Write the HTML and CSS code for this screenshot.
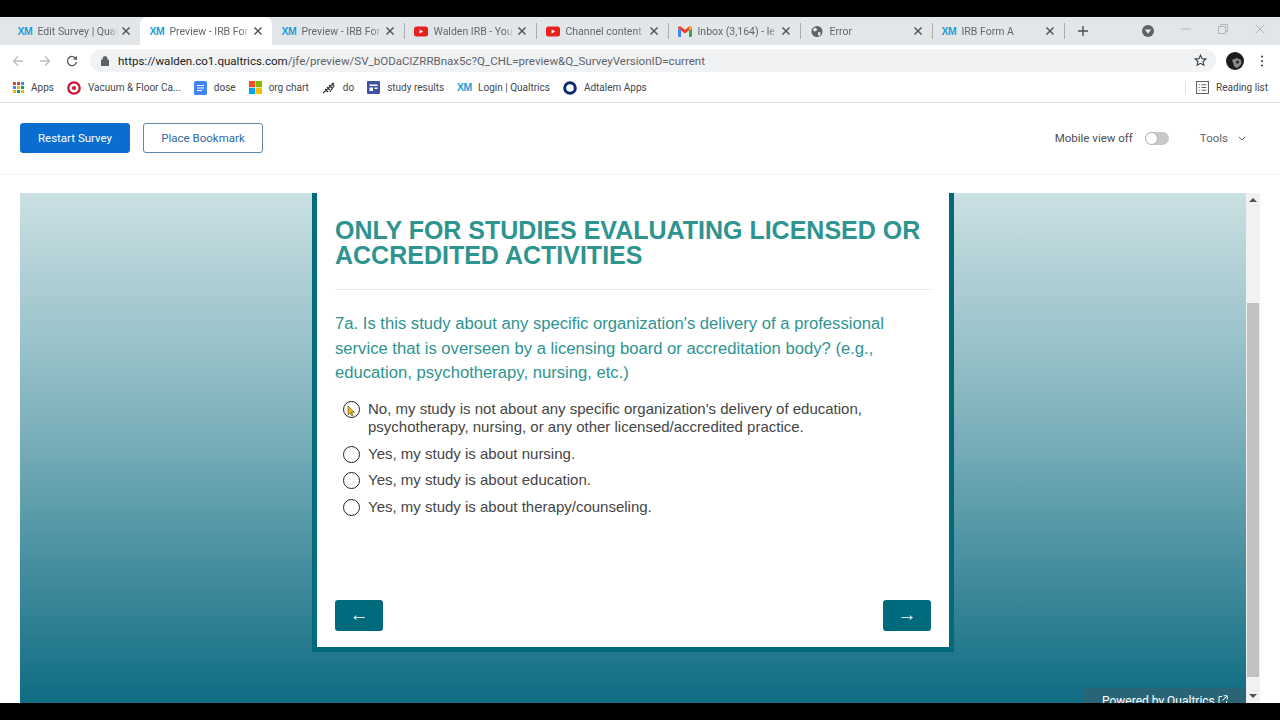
FILE: index.html
```html
<!DOCTYPE html>
<html lang="en">

<head>
    <meta charset="UTF-8">
    <meta name="viewport" content="width=device-width, initial-scale=1.0">
    <title>Preview - IRB Form</title>
    <link rel="stylesheet" href="styles.css">
</head>

<body>
    <svg class="defs" width="0" height="0">
        <symbol id="close" viewBox="0 0 10 10">
            <path d="M1.5 1.5l7 7M8.5 1.5l-7 7" fill="none" stroke="#4a4d51" stroke-width="1.4" />
        </symbol>
        <symbol id="yt" viewBox="0 0 14 10">
            <rect width="14" height="10" rx="2.5" fill="#e8211c" />
            <path d="M5.6 2.9v4.2L9.2 5z" fill="#fff" />
        </symbol>
    </svg>

    <div class="black-bar"></div>

    <!-- Tabs -->
    <div class="tab-strip">
        <div class="tab">
            <span class="xm">XM</span>
            <span class="tab-title">Edit Survey | Qual</span>
            <svg class="tab-close"><use href="#close" /></svg>
        </div>
        <div class="tab active">
            <span class="xm">XM</span>
            <span class="tab-title">Preview - IRB For</span>
            <svg class="tab-close"><use href="#close" /></svg>
        </div>
        <div class="tab">
            <span class="xm">XM</span>
            <span class="tab-title">Preview - IRB For</span>
            <svg class="tab-close"><use href="#close" /></svg>
        </div>
        <div class="tab sep">
            <svg class="tab-icon"><use href="#yt" /></svg>
            <span class="tab-title">Walden IRB - You</span>
            <svg class="tab-close"><use href="#close" /></svg>
        </div>
        <div class="tab sep">
            <svg class="tab-icon"><use href="#yt" /></svg>
            <span class="tab-title">Channel content</span>
            <svg class="tab-close"><use href="#close" /></svg>
        </div>
        <div class="tab sep">
            <svg class="tab-icon" viewBox="0 0 14 11">
                <path d="M0 2v8a1 1 0 0 0 1 1h2V4.5z" fill="#4285f4" />
                <path d="M14 2v8a1 1 0 0 1-1 1h-2V4.5z" fill="#34a853" />
                <path d="M0 2l3 2.5L7 7.5l4-3L14 2C14 .5 12.5-.3 11.300 .6L7 3.800 2.700 .6C1.500-.3 0 .5 0 2z" fill="#ea4335" />
                <path d="M11 1v3.500L14 2C14 .8 12.200-.2 11 1z" fill="#fbbc04" />
            </svg>
            <span class="tab-title">Inbox (3,164) - le</span>
            <svg class="tab-close"><use href="#close" /></svg>
        </div>
        <div class="tab sep">
            <svg class="tab-icon" viewBox="0 0 12 12">
                <circle cx="6" cy="6" r="6" fill="#5f6368" />
                <path d="M3 1.500l2.500 1 .5 2-2 1.500-2.500-1zM7 6.500l3 .5-.5 3L7.500 11z" fill="#e8eaed" />
            </svg>
            <span class="tab-title">Error</span>
            <svg class="tab-close"><use href="#close" /></svg>
        </div>
        <div class="tab sep">
            <span class="xm">XM</span>
            <span class="tab-title">IRB Form A</span>
            <svg class="tab-close"><use href="#close" /></svg>
        </div>
        <div class="new-tab sep">
            <svg viewBox="0 0 10 10" width="10" height="10">
                <path d="M5 0v10M0 5h10" stroke="#4a4d51" stroke-width="1.400" />
            </svg>
        </div>
        <svg class="profile-drop" viewBox="0 0 12 12" width="12" height="12">
            <circle cx="6" cy="6" r="6" fill="#5f6368" />
            <path d="M2.800 4.500h6.400L6 8.800z" fill="#e8eaed" />
        </svg>
        <div class="window-btns">
            <svg viewBox="0 0 10 10" width="10" height="10"><path d="M0 5h10" stroke="#b4b6b9" /></svg>
            <svg viewBox="0 0 10 10" width="10" height="10">
                <path d="M.5 2.500h7v7h-7zM2.500 2.500v-2h7v7h-2" fill="none" stroke="#b4b6b9" />
            </svg>
            <svg viewBox="0 0 10 10" width="10" height="10"><path d="M.5 .5l9 9M9.500 .5l-9 9" stroke="#b4b6b9" /></svg>
        </div>
    </div>

    <!-- Address bar -->
    <div class="toolbar">
        <svg class="nav-icon" viewBox="0 0 12 12" width="12" height="12">
            <path d="M11 6H2M6 1.500L1.500 6 6 10.500" fill="none" stroke="#b9bcc0" stroke-width="1.300" />
        </svg>
        <svg class="nav-icon" viewBox="0 0 12 12" width="12" height="12">
            <path d="M1 6h9M6 1.500L10.500 6 6 10.500" fill="none" stroke="#b9bcc0" stroke-width="1.300" />
        </svg>
        <svg class="nav-icon" viewBox="0 0 12 12" width="12" height="12">
            <path d="M10.200 4A4.600 4.600 0 1 0 10.600 7" fill="none" stroke="#55585c" stroke-width="1.300" />
            <path d="M11 .8v4H7z" fill="#55585c" />
        </svg>
        <div class="omnibox">
            <svg class="lock" viewBox="0 0 8 10" width="8" height="10">
                <path d="M0 4h8v6H0zM1.800 4V2.600a2.200 2.200 0 0 1 4.400 0V4" fill="#5f6368" stroke="#5f6368" stroke-width=".7" fill-rule="evenodd" />
            </svg>
            <span class="url">https://walden.co1.qualtrics.com<span class="url-rest">/jfe/preview/SV_bODaClZRRBnax5c?Q_CHL=preview&amp;Q_SurveyVersionID=current</span></span>
            <svg class="star" viewBox="0 0 14 14" width="13" height="13">
                <path d="M7 1.300l1.700 3.700 4 .4-3 2.700.9 4L7 10l-3.600 2.100.9-4-3-2.700 4-.4z" fill="none" stroke="#3c4043" stroke-width="1.200" />
            </svg>
        </div>
        <svg class="avatar" viewBox="0 0 18 18" width="18" height="18">
            <circle cx="9" cy="9" r="9" fill="#1c1c1c" />
            <path d="M6 8l5-2 4 2 .5 4-4 4-3-1-1-3z" fill="#8a8a8a" />
            <circle cx="11.500" cy="10" r="1.500" fill="#222" />
        </svg>
        <svg class="menu-dots" viewBox="0 0 4 12" width="4" height="12">
            <circle cx="2" cy="1.500" r="1.100" fill="#44474a" />
            <circle cx="2" cy="6" r="1.100" fill="#44474a" />
            <circle cx="2" cy="10.500" r="1.100" fill="#44474a" />
        </svg>
    </div>

    <!-- Bookmarks -->
    <div class="bookmarks">
        <div class="bookmark">
            <svg viewBox="0 0 11 11" width="11" height="11">
                <g fill="#db4437"><rect width="3" height="3" /><rect x="4" width="3" height="3" /></g>
                <rect x="8" width="3" height="3" fill="#4285f4" />
                <rect y="4" width="3" height="3" fill="#4285f4" />
                <rect x="4" y="4" width="3" height="3" fill="#f4b400" />
                <rect x="8" y="4" width="3" height="3" fill="#0f9d58" />
                <rect y="8" width="3" height="3" fill="#f4b400" />
                <rect x="4" y="8" width="3" height="3" fill="#0f9d58" />
                <rect x="8" y="8" width="3" height="3" fill="#f4b400" />
            </svg>
            <span>Apps</span>
        </div>
        <div class="bookmark">
            <svg viewBox="0 0 14 14" width="14" height="14">
                <circle cx="7" cy="7" r="5.700" fill="none" stroke="#c8102e" stroke-width="2.200" />
                <circle cx="7" cy="7" r="2" fill="#c8102e" />
            </svg>
            <span>Vacuum &amp; Floor Ca...</span>
        </div>
        <div class="bookmark">
            <svg viewBox="0 0 13 14" width="13" height="14">
                <rect width="13" height="14" rx="1.500" fill="#4285f4" />
                <path d="M3 4.500h7M3 7h7M3 9.500h5" stroke="#fff" />
            </svg>
            <span>dose</span>
        </div>
        <div class="bookmark">
            <svg viewBox="0 0 13 13" width="13" height="13">
                <rect width="6.200" height="6.200" fill="#f25022" />
                <rect x="6.800" width="6.200" height="6.200" fill="#7fba00" />
                <rect y="6.800" width="6.200" height="6.200" fill="#00a4ef" />
                <rect x="6.800" y="6.800" width="6.200" height="6.200" fill="#ffb900" />
            </svg>
            <span>org chart</span>
        </div>
        <div class="bookmark">
            <svg viewBox="0 0 14 14" width="14" height="14">
                <path d="M1 12L12 2M3 8l3 3M5 6l3 3M7 4l3 3M10 2l2 3-4 6" fill="none" stroke="#333" stroke-width="1.100" />
            </svg>
            <span>do</span>
        </div>
        <div class="bookmark">
            <svg viewBox="0 0 13 13" width="13" height="13">
                <rect width="13" height="13" rx="1" fill="#3f51a5" />
                <path d="M2.500 3.500h8v1.500h-8zM2.500 6.500h3.500v3.500h-3.500zM7.500 6.500h3v1.500h-3z" fill="#fff" />
            </svg>
            <span>study results</span>
        </div>
        <div class="bookmark">
            <span class="xm">XM</span>
            <span>Login | Qualtrics</span>
        </div>
        <div class="bookmark">
            <svg viewBox="0 0 14 14" width="14" height="14">
                <circle cx="7" cy="7" r="5.300" fill="none" stroke="#0b2a6b" stroke-width="3" />
            </svg>
            <span>Adtalem Apps</span>
        </div>
        <div class="reading-list">
            <svg viewBox="0 0 12 12" width="13" height="13">
                <path d="M.5 .5h11v11H.5zM2.500 3.500h1M5 3.500h4.500M2.500 6h1M5 6h4.500M2.500 8.500h1M5 8.500h4.500" fill="none" stroke="#5f6368" />
            </svg>
            <span>Reading list</span>
        </div>
    </div>

    <!-- Qualtrics preview header -->
    <div class="preview-bar">
        <button class="btn btn-primary">Restart Survey</button>
        <button class="btn btn-outline">Place Bookmark</button>
        <div class="preview-right">
            <span>Mobile view off</span>
            <span class="toggle"><span class="toggle-knob"></span></span>
            <span class="tools">Tools</span>
            <svg viewBox="0 0 8 5" width="8" height="5">
                <path d="M.7 .7L4 4l3.300-3.300" fill="none" stroke="#666" />
            </svg>
        </div>
    </div>

    <!-- Survey -->
    <div class="stage">
        <div class="survey-frame">
            <div class="card">
                <h1>ONLY FOR STUDIES EVALUATING LICENSED OR ACCREDITED ACTIVITIES</h1>
                <hr>
                <p class="question">7a. Is this study about any specific organization's delivery of a professional service that is overseen by a licensing board or accreditation body? (e.g., education, psychotherapy, nursing, etc.)</p>
                <div class="options">
                    <div class="option">
                        <span class="radio"></span>
                        <span>No, my study is not about any specific organization's delivery of education, psychotherapy, nursing, or any other licensed/accredited practice.</span>
                        <svg class="cursor" viewBox="0 0 8 12" width="8" height="12">
                            <path d="M1 1v9l2.200-2 1.500 3 1.300-.6-1.500-3H7.500z" fill="#e8b923" stroke="#5a4a10" stroke-width=".6" />
                        </svg>
                    </div>
                    <div class="option"><span class="radio"></span><span>Yes, my study is about nursing.</span></div>
                    <div class="option"><span class="radio"></span><span>Yes, my study is about education.</span></div>
                    <div class="option"><span class="radio"></span><span>Yes, my study is about therapy/counseling.</span></div>
                </div>
                <div class="nav-row">
                    <button class="nav-btn">←</button>
                    <button class="nav-btn">→</button>
                </div>
            </div>
            <div class="powered">Powered by Qualtrics
                <svg viewBox="0 0 10 10" width="10" height="10">
                    <path d="M4 1.500H1v7.500h7.500V6M5.500 .8h3.700v3.700M9 1L4.500 5.500" fill="none" stroke="#fff" />
                </svg>
            </div>
        </div>
        <div class="scrollbar">
            <span class="arrow-up"></span>
            <span class="thumb"></span>
            <span class="arrow-down"></span>
        </div>
    </div>

    <div class="black-bar"></div>
</body>

</html>
```

FILE: styles.css
```css
* {
    box-sizing: border-box;
}

body {
    margin: 0;
    height: 720px;
    overflow: hidden;
    display: flex;
    flex-direction: column;
    background-color: #fff;
    font-family: Roboto, Arial, sans-serif;
}

.defs {
    position: absolute;
}

.black-bar {
    height: 17px;
    flex: none;
    background-color: #000;
}

/* Tabs */
.tab-strip {
    height: 28px;
    flex: none;
    display: flex;
    align-items: stretch;
    padding-left: 7.5px;
    background-color: #e3e6e9;
}

.tab {
    width: 132px;
    display: flex;
    align-items: center;
    padding-left: 10px;
    padding-right: 8.5px;
    position: relative;
    font-size: 10.5px;
    color: #63676b;
}

.tab.active {
    background-color: #fff;
    border-radius: 7px 7px 0 0;
}

.tab.sep::before,
.new-tab.sep::before {
    content: "";
    position: absolute;
    left: 0;
    top: 6px;
    height: 16px;
    width: 1px;
    background-color: #a9adb1;
}

.xm {
    width: 14px;
    flex: none;
    font-family: "Liberation Sans", Arial, sans-serif;
    font-size: 10.5px;
    line-height: 1;
    font-weight: bold;
    letter-spacing: -0.5px;
    color: #1a9fdc;
}

.tab-icon {
    width: 14px;
    height: 11px;
    flex: none;
}

.tab-title {
    flex: 1;
    min-width: 0;
    margin-left: 6px;
    margin-right: 3px;
    white-space: nowrap;
    overflow: hidden;
    -webkit-mask-image: linear-gradient(to right, #000 88%, transparent 100%);
    mask-image: linear-gradient(to right, #000 88%, transparent 100%);
}

.tab-close {
    width: 10px;
    height: 10px;
    flex: none;
}

.new-tab {
    width: 38px;
    display: flex;
    align-items: center;
    justify-content: center;
    position: relative;
}

.profile-drop {
    align-self: center;
    margin-left: 40px;
}

.window-btns {
    display: flex;
    align-items: center;
    gap: 27px;
    margin-left: auto;
    padding-right: 15px;
    padding-bottom: 5px;
}

/* Address bar */
.toolbar {
    height: 31px;
    flex: none;
    display: flex;
    align-items: center;
    padding-left: 12px;
    background-color: #fff;
}

.nav-icon {
    margin-right: 15px;
}

.omnibox {
    width: 1126px;
    height: 23px;
    margin-left: -3px;
    display: flex;
    align-items: center;
    padding-left: 11px;
    padding-right: 9px;
    border-radius: 12px;
    background-color: #f0f2f4;
}

.lock {
    flex: none;
}

.url {
    margin-left: 9px;
    font-size: 11.55px;
    color: #202124;
    white-space: nowrap;
}

.url-rest {
    color: #5f6368;
}

.star {
    margin-left: auto;
}

.avatar {
    margin-left: 10px;
}

.menu-dots {
    margin-left: 16px;
}

/* Bookmarks */
.bookmarks {
    height: 27px;
    flex: none;
    display: flex;
    align-items: center;
    padding-left: 13px;
    padding-bottom: 3px;
    gap: 13px;
    border-bottom: 1px solid #dfe1e4;
    font-size: 10px;
    color: #44474a;
    background-color: #fff;
}

.bookmark {
    display: flex;
    align-items: center;
    gap: 7px;
    white-space: nowrap;
}

.bookmark .xm {
    gap: 6px;
}

.reading-list {
    margin-left: auto;
    margin-right: 12px;
    display: flex;
    align-items: center;
    gap: 7px;
    padding-left: 10px;
    border-left: 1px solid #dfe1e4;
}

/* Preview header */
.preview-bar {
    height: 72px;
    flex: none;
    display: flex;
    align-items: center;
    padding-left: 20px;
    padding-right: 34px;
    padding-bottom: 1px;
    gap: 13px;
    border-bottom: 1px solid #f4f4f4;
}

.btn {
    height: 30px;
    padding: 0;
    border-radius: 3px;
    font-family: Roboto, Arial, sans-serif;
    font-size: 11.5px;
    cursor: pointer;
}

.btn-primary {
    width: 110px;
    border: 1px solid #0a6ed1;
    background-color: #0a6ed1;
    color: #fff;
}

.btn-outline {
    width: 120px;
    border: 1px solid #5c88a8;
    background-color: #fff;
    color: #2f69a5;
}

.preview-right {
    margin-left: auto;
    display: flex;
    align-items: center;
    font-size: 11.5px;
    color: #4e4e4e;
}

.toggle {
    width: 24px;
    height: 13px;
    margin-left: 12px;
    border-radius: 7px;
    background-color: #c8c8c8;
    display: flex;
    align-items: center;
}

.toggle-knob {
    width: 13px;
    height: 13px;
    border-radius: 50%;
    background-color: #fff;
    border: 1px solid #b0b0b0;
}

.tools {
    margin-left: 31px;
    margin-right: 10px;
    color: #666;
}

/* Survey */
.stage {
    flex: 1;
    min-height: 0;
    display: flex;
    align-items: stretch;
    padding: 18px 20px 0 20px;
    overflow: hidden;
}

.survey-frame {
    width: 1226px;
    position: relative;
    display: flex;
    justify-content: center;
    align-items: flex-start;
    overflow: hidden;
    background: linear-gradient(to bottom, #cbe0e3 0%, #7fb2bc 45%, #0f6c83 100%);
}

.card {
    width: 642px;
    height: 459px;
    display: flex;
    flex-direction: column;
    padding: 25px 18px 16px 18px;
    border: 5px solid #006a7d;
    border-top: none;
    background-color: #fff;
}

h1 {
    margin: 0;
    font-family: "Liberation Sans", Arial, sans-serif;
    font-size: 25px;
    line-height: 25px;
    font-weight: bold;
    color: #2e9490;
}

hr {
    width: 100%;
    margin: 21px 0 22px 0;
    border: none;
    border-top: 1px solid #e8e8e8;
}

.question {
    margin: 0;
    font-family: "Liberation Sans", Arial, sans-serif;
    font-size: 16.65px;
    line-height: 24.7px;
    color: #2e9490;
}

.options {
    margin-top: 14px;
    display: flex;
    flex-direction: column;
    gap: 8.7px;
}

.option {
    position: relative;
    display: flex;
    align-items: flex-start;
    gap: 8px;
    padding-left: 8px;
    font-family: "Liberation Sans", Arial, sans-serif;
    font-size: 15px;
    line-height: 18px;
    color: #454545;
}

.radio {
    width: 17px;
    height: 17px;
    flex: none;
    margin-top: 1px;
    border: 1.6px solid #222;
    border-radius: 50%;
    background-color: #fff;
}

.cursor {
    position: absolute;
    left: 12px;
    top: 5px;
}

.nav-row {
    margin-top: auto;
    display: flex;
    justify-content: space-between;
}

.nav-btn {
    width: 48px;
    height: 31px;
    padding: 0 0 3px 0;
    border: none;
    border-radius: 3px;
    background-color: #006a7d;
    color: #fff;
    font-family: "Liberation Sans", Arial, sans-serif;
    font-size: 19px;
    line-height: 1;
}

.powered {
    position: absolute;
    right: 0;
    top: 495px;
    width: 163px;
    height: 30px;
    padding-top: 6px;
    padding-left: 19px;
    background-color: #2a6577;
    color: #fff;
    font-size: 12px;
    white-space: nowrap;
}

/* Scrollbar */
.scrollbar {
    width: 14px;
    flex: none;
    position: relative;
    background-color: #f1f1f1;
}

.thumb {
    position: absolute;
    left: 1px;
    right: 1px;
    top: 110px;
    height: 374px;
    background-color: #c1c1c1;
}

.arrow-up,
.arrow-down {
    position: absolute;
    left: 3px;
    width: 0;
    height: 0;
    border-left: 4px solid transparent;
    border-right: 4px solid transparent;
}

.arrow-up {
    top: 5px;
    border-bottom: 4px solid #505050;
}

.arrow-down {
    top: 501px;
    border-top: 4px solid #505050;
}
```
